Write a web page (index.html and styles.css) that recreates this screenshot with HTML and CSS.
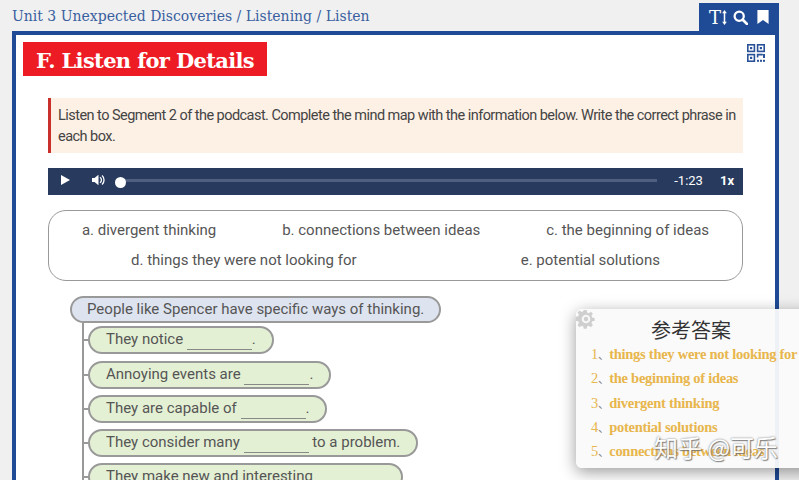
FILE: index.html
```html
<!DOCTYPE html>
<html lang="en">

<head>
    <meta charset="UTF-8">
    <meta name="viewport" content="width=device-width, initial-scale=1.0">
    <link rel="stylesheet" href="styles.css">
</head>

<body>
    <div class="page">
        <div class="top-row">
            <div class="breadcrumb">Unit 3 Unexpected Discoveries / Listening / Listen</div>
            <div class="tools">
                <span class="tool-text">T</span>
                <svg class="tool-arrow" width="5" height="15" viewBox="0 0 5 16"><path d="M2.500 0 5 3.500H3.300v9H5L2.500 16 0 12.500h1.700v-9H0z" fill="#fff"/></svg>
                <svg class="tool-search" width="15" height="15" viewBox="0 0 16 16"><circle cx="6.600" cy="6.600" r="4.900" fill="none" stroke="#fff" stroke-width="2.400"/><path d="M10.400 10.400 14.800 14.800" stroke="#fff" stroke-width="3" stroke-linecap="round"/></svg>
                <svg class="tool-mark" width="12" height="14" viewBox="0 0 12 15"><path d="M0 0h12v15L6 10.800 0 15z" fill="#fff"/></svg>
            </div>
        </div>

        <div class="frame">
            <div class="title-row">
                <h1 class="title">F. Listen for Details</h1>
                <svg class="qr" width="18" height="18" viewBox="0 0 18 18">
                    <g fill="none" stroke="#2a5298" stroke-width="1.600">
                        <rect x="0.800" y="0.800" width="6.600" height="6.600"/>
                        <rect x="10.600" y="0.800" width="6.600" height="6.600"/>
                        <rect x="0.800" y="10.600" width="6.600" height="6.600"/>
                    </g>
                    <g fill="#2a5298">
                        <rect x="3" y="3" width="2.200" height="2.200"/>
                        <rect x="12.800" y="3" width="2.200" height="2.200"/>
                        <rect x="3" y="12.800" width="2.200" height="2.200"/>
                        <path d="M9.800 9.800h6v1.600h-4.400v2.200H9.800z"/>
                        <rect x="16" y="10" width="2" height="4"/>
                        <rect x="10" y="15.800" width="2" height="2"/>
                        <rect x="13" y="15.800" width="2" height="2"/>
                        <rect x="16" y="15.800" width="2" height="2"/>
                    </g>
                </svg>
            </div>

            <div class="content">
                <p class="notice">Listen to Segment 2 of the podcast. Complete the mind map with the information below. Write the correct phrase in each box.</p>

                <div class="player">
                    <svg class="play" width="9" height="10" viewBox="0 0 9 10"><path d="M0 0 9 5 0 10z" fill="#fff"/></svg>
                    <svg class="volume" width="13" height="12" viewBox="0 0 13 12"><path d="M0 4h2.500L6.500 .8v10.400L2.500 8H0z" fill="#fff"/><path d="M8 3.200a3.400 3.400 0 0 1 0 5.600" fill="none" stroke="#fff" stroke-width="1.300"/><path d="M10 1.500a6 6 0 0 1 0 9" fill="none" stroke="#fff" stroke-width="1.300"/></svg>
                    <div class="track"><span class="knob"></span></div>
                    <span class="time">-1:23</span>
                    <span class="speed">1x</span>
                </div>

                <div class="word-box">
                    <div class="word-row">
                        <span>a. divergent thinking</span>
                        <span>b. connections between ideas</span>
                        <span>c. the beginning of ideas</span>
                    </div>
                    <div class="word-row">
                        <span>d. things they were not looking for</span>
                        <span>e. potential solutions</span>
                    </div>
                </div>

                <div class="mindmap">
                    <div class="root-pill">People like Spencer have specific ways of thinking.</div>
                    <ul class="branches">
                        <li><div class="pill">They notice <span class="blank"></span>.</div></li>
                        <li><div class="pill">Annoying events are <span class="blank"></span>.</div></li>
                        <li><div class="pill">They are capable of <span class="blank"></span>.</div></li>
                        <li><div class="pill">They consider many <span class="blank"></span> to a problem.</div></li>
                        <li><div class="pill wide">They make new and interesting</div></li>
                    </ul>
                </div>
            </div>
        </div>

        <div class="answers">
            <svg class="gear" width="20" height="20" viewBox="0 0 20 20">
                <path fill="#cfcfcf" d="M8.200 0h3.600l.5 3 2.100.9 2.500-1.800 2.500 2.500-1.800 2.500.9 2.100 3 .5v3.600l-3 .5-.9 2.100 1.800 2.500-2.500 2.500-2.500-1.800-2.100.9-.5 3H8.200l-.5-3-2.100-.9-2.500 1.800-2.500-2.500 1.800-2.500-.9-2.100-3-.5V8.200l3-.5.9-2.100L.6 3.100 3.100.6l2.500 1.800 2.100-.9z" transform="translate(1 1) scale(.82)"/>
                <circle cx="10" cy="10" r="4.300" fill="#f7f7f7"/>
                <circle cx="10" cy="10" r="2.200" fill="#cfcfcf"/>
            </svg>
            <div class="answers-title">参考答案</div>
            <ol class="answer-list">
                <li><span class="num">1</span><span class="sep">、</span>things they were not looking for</li>
                <li><span class="num">2</span><span class="sep">、</span>the beginning of ideas</li>
                <li><span class="num">3</span><span class="sep">、</span>divergent thinking</li>
                <li><span class="num">4</span><span class="sep">、</span>potential solutions</li>
                <li><span class="num">5</span><span class="sep">、</span>connections between ideas</li>
            </ol>
        </div>
        <div class="watermark">知乎 @可乐</div>
    </div>
</body>

</html>
```

FILE: styles.css
```css
/* Page */
body {
    margin: 0;
    font-family: Roboto, Arial, sans-serif;
    background: #f0f0f0;
}

.page {
    position: relative;
    width: 799px;
    height: 480px;
    padding: 0 20px 0 12px;
    box-sizing: border-box;
    overflow: hidden;
}

/* Breadcrumb and tool tab */
.top-row {
    display: flex;
    justify-content: space-between;
    height: 35px;
    padding-top: 3px;
    box-sizing: border-box;
}

.breadcrumb {
    font-family: "DejaVu Serif", serif;
    font-size: 14px;
    line-height: 27px;
    color: #3a5f9f;
}

.tools {
    display: flex;
    align-items: center;
    width: 80px;
    padding: 0 0 4px 10px;
    box-sizing: border-box;
    background: #1f4b96;
}

.tool-text {
    font-family: "DejaVu Serif", serif;
    font-size: 18px;
    color: #fff;
}

.tool-arrow {
    margin: 0 6px 0 1px;
}

.tool-search {
    margin-right: 9px;
}

/* Main frame */
.frame {
    height: 470px;
    margin-top: -4px;
    border: 4px solid #1f4b96;
    background: #fff;
}

.title-row {
    display: flex;
    justify-content: space-between;
    padding: 7px 10px 0 7px;
}

.title {
    margin: 0;
    width: 244px;
    height: 34px;
    padding-left: 13px;
    box-sizing: border-box;
    font-family: "DejaVu Serif", serif;
    font-size: 21px;
    line-height: 37px;
    letter-spacing: -0.65px;
    color: #fff;
    background: #ed1c24;
}

.qr {
    margin-top: 2px;
}

.content {
    padding: 22px 32px 0 32px;
}

/* Instruction */
.notice {
    margin: 0;
    height: 55px;
    padding: 7px 3px 0 7px;
    box-sizing: border-box;
    border-left: 3px solid #c9302c;
    background: #fdf0e4;
    font-size: 14.5px;
    line-height: 21px;
    letter-spacing: -0.54px;
    color: #444;
}

/* Audio player */
.player {
    display: flex;
    align-items: center;
    height: 27px;
    margin-top: 15px;
    padding: 0 9px 3px 13px;
    box-sizing: border-box;
    background: #283a5e;
    color: #fff;
    font-size: 13px;
}

.volume {
    margin-left: 22px;
}

.track {
    position: relative;
    flex: 1;
    height: 3px;
    margin: 0 17px 0 11px;
    background: #4f5f80;
}

.knob {
    position: absolute;
    left: -1px;
    top: -2px;
    width: 11px;
    height: 11px;
    border-radius: 50%;
    background: #fff;
}

.speed {
    margin-left: 17px;
    font-weight: bold;
}

/* Word box */
.word-box {
    height: 71px;
    margin-top: 15px;
    padding: 4px 0;
    box-sizing: border-box;
    border: 1px solid #999;
    border-radius: 18px;
    font-size: 15px;
    line-height: 30px;
    color: #555;
}

.word-row {
    display: flex;
    justify-content: space-around;
}

/* Mind map */
.mindmap {
    margin: 15px 0 0 22px;
    font-size: 15px;
    color: #555;
}

.root-pill {
    width: 371px;
    height: 27px;
    box-sizing: border-box;
    border: 2px solid #999;
    border-radius: 14px;
    padding-left: 15px;
    line-height: 23px;
    background: #dde3ef;
}

.branches {
    list-style: none;
    margin: 0 0 0 12px;
    padding: 3px 0 0 0;
    border-left: 2px solid #999;
}

.branches li {
    display: flex;
    align-items: center;
    height: 28px;
    margin-bottom: 6px;
}

.branches li:first-child {
    margin-bottom: 7px;
}

.branches li::before {
    content: "";
    width: 4px;
    height: 2px;
    background: #999;
}

.pill {
    height: 28px;
    padding: 0 16px;
    box-sizing: border-box;
    border: 2px solid #999;
    border-radius: 14px;
    line-height: 23px;
    background: #e4f0d4;
}

.blank {
    display: inline-block;
    width: 65px;
    height: 18px;
    vertical-align: -6px;
    border-bottom: 1px solid #888;
}

.wide {
    width: 315px;
}

/* Answer panel over the page */
.answers {
    position: absolute;
    left: 576px;
    top: 309px;
    width: 240px;
    height: 159px;
    border-radius: 6px;
    background: rgba(250, 250, 250, 0.95);
    box-shadow: 0 4px 16px rgba(0, 0, 0, 0.4);
}

.gear {
    position: absolute;
    left: 0;
    top: 0;
}

.answers-title {
    width: 230px;
    padding-top: 8px;
    text-align: center;
    font-family: "Noto Sans CJK SC", sans-serif;
    font-size: 20px;
    line-height: 25px;
    color: #333;
}

.answer-list {
    list-style: none;
    margin: 0;
    padding: 0 0 0 15px;
    font-family: "Liberation Serif", serif;
    font-size: 14.5px;
    font-weight: bold;
    letter-spacing: -0.27px;
    color: #e8b64c;
    white-space: nowrap;
}

.answer-list li {
    height: 24.3px;
    line-height: 24.3px;
}

.num {
    font-weight: normal;
}

.sep {
    font-family: "Noto Sans CJK SC", sans-serif;
    font-size: 11.5px;
    font-weight: normal;
    line-height: 1;
    color: #888;
}

.watermark {
    position: absolute;
    left: 654px;
    top: 431px;
    font-family: "Noto Sans CJK SC", sans-serif;
    font-size: 24px;
    line-height: 32px;
    color: #fff;
    opacity: 0.85;
    text-shadow: 0 0 2px #555, 1px 1px 1px #777;
}
```
